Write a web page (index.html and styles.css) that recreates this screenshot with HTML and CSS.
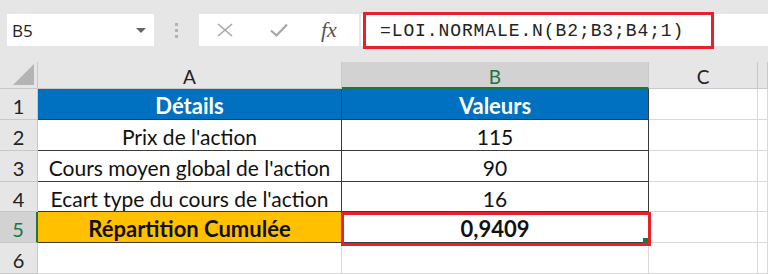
FILE: index.html
```html
<!DOCTYPE html>
<html lang="fr">

<head>
    <meta charset="UTF-8">
    <meta name="viewport" content="width=device-width, initial-scale=1.0">
    <title>LOI.NORMALE.N</title>
    <link rel="stylesheet" href="styles.css">
</head>

<body>
    <div class="toolbar">
        <div class="name-box">
            <span>B5</span>
            <span class="arrow"></span>
        </div>
        <div class="dots">
            <span></span>
            <span></span>
            <span></span>
        </div>
        <div class="func-box">
            <svg class="ico-x" width="16" height="14" viewBox="0 0 16 14">
                <path d="M1 1 L15 13 M15 1 L1 13" stroke="#a6a6a6" stroke-width="1.6" fill="none" />
            </svg>
            <svg class="ico-ok" width="18" height="14" viewBox="0 0 18 14">
                <path d="M1 7.5 L6.5 12.5 L17 1.5" stroke="#a6a6a6" stroke-width="2.2" fill="none" />
            </svg>
            <span class="fx">fx</span>
        </div>
        <div class="formula">
            <div class="formula-hl">=LOI.NORMALE.N(B2;B3;B4;1)</div>
        </div>
    </div>

    <div class="sheet">
        <!-- en-tetes de colonnes -->
        <div class="hd corner"><span class="tri"></span></div>
        <div class="hd">A</div>
        <div class="hd sel-col">B</div>
        <div class="hd">C</div>
        <div class="hd"></div>

        <!-- ligne 1 -->
        <div class="hd row-no">1</div>
        <div class="c t blue">Détails</div>
        <div class="c t blue">Valeurs</div>
        <div class="c"></div>
        <div class="c"></div>

        <!-- ligne 2 -->
        <div class="hd row-no">2</div>
        <div class="c t">Prix de l'action</div>
        <div class="c t">115</div>
        <div class="c"></div>
        <div class="c"></div>

        <!-- ligne 3 -->
        <div class="hd row-no">3</div>
        <div class="c t">Cours moyen global de l'action</div>
        <div class="c t">90</div>
        <div class="c"></div>
        <div class="c"></div>

        <!-- ligne 4 -->
        <div class="hd row-no">4</div>
        <div class="c t">Ecart type du cours de l'action</div>
        <div class="c t">16</div>
        <div class="c"></div>
        <div class="c"></div>

        <!-- ligne 5 -->
        <div class="hd row-no sel-row">5</div>
        <div class="c t orange">Répartition Cumulée</div>
        <div class="c t bold active">0,9409<span class="handle"></span></div>
        <div class="c"></div>
        <div class="c"></div>

        <!-- ligne 6 -->
        <div class="hd row-no">6</div>
        <div class="c"></div>
        <div class="c"></div>
        <div class="c"></div>
        <div class="c"></div>
    </div>
</body>

</html>
```

FILE: styles.css
```css
* {
    margin: 0;
    padding: 0;
    box-sizing: border-box;
}

body {
    width: 768px;
    height: 274px;
    overflow: hidden;
    background-color: #e6e6e6;
    font-family: Lato, "Liberation Sans", sans-serif;
}

/* barre de formule */
.toolbar {
    display: flex;
    align-items: flex-start;
    height: 62px;
    padding-top: 14px;
    padding-left: 7px;
}

.name-box {
    display: flex;
    align-items: center;
    justify-content: space-between;
    width: 147px;
    height: 32px;
    padding: 0 8px 0 5px;
    background-color: white;
    font-family: "Open Sans", sans-serif;
    font-size: 17px;
    color: #222;
}

.arrow {
    width: 0;
    height: 0;
    border-left: 5px solid transparent;
    border-right: 5px solid transparent;
    border-top: 5px solid #666;
}

.dots {
    display: flex;
    flex-direction: column;
    align-items: center;
    gap: 3px;
    width: 45px;
    padding-top: 9px;
}

.dots span {
    width: 3px;
    height: 3px;
    background-color: #b3b3b3;
}

.func-box {
    display: flex;
    align-items: center;
    width: 160px;
    height: 32px;
    background-color: white;
}

.ico-x {
    margin-left: 18px;
}

.ico-ok {
    margin-left: 37px;
}

.fx {
    margin-left: 33px;
    font-family: "Liberation Serif", serif;
    font-style: italic;
    font-size: 22px;
    color: #555;
    line-height: 1;
}

.formula {
    flex: 1;
    height: 32px;
    margin-left: 2px;
    background-color: white;
}

.formula-hl {
    display: flex;
    align-items: center;
    width: 351px;
    height: 37px;
    margin-top: -2px;
    margin-left: 2px;
    padding-left: 14px;
    border: 3px solid #e8202a;
    font-family: "Liberation Mono", monospace;
    font-size: 18px;
    letter-spacing: 0.9px;
    color: #222;
}

/* feuille */
.sheet {
    display: grid;
    grid-template-columns: 38px 304px 307px 109px 10px;
    grid-template-rows: 27px 31px 31px 31px 30px 31px 31px;
    background-color: white;
}

.hd {
    display: flex;
    align-items: center;
    justify-content: center;
    padding-top: 3px;
    background-color: #e6e6e6;
    border-right: 1px solid #c8c8c8;
    border-bottom: 1px solid #c8c8c8;
    font-size: 19px;
    color: #222;
}

.corner {
    position: relative;
}

.tri {
    position: absolute;
    right: 3px;
    bottom: 3px;
    width: 0;
    height: 0;
    border-left: 21px solid transparent;
    border-bottom: 21px solid #b4b4b4;
}

.row-no {
    font-size: 20px;
    padding-top: 4px;
}

.sel-col {
    background-color: #d2d2d2;
    border-bottom: 2px solid #217346;
    color: #217346;
}

.sel-row {
    background-color: #d2d2d2;
    border-right: 2px solid #217346;
    color: #217346;
}

.c {
    display: flex;
    align-items: center;
    justify-content: center;
    padding-top: 3px;
    border-right: 1px solid #d9d9d9;
    border-bottom: 1px solid #d9d9d9;
    font-size: 21px;
    color: #111;
    white-space: nowrap;
}

.c.t {
    border-right-color: #3a3a3a;
    border-bottom-color: #3a3a3a;
}

.blue {
    background-color: #0070c0;
    color: white;
    font-weight: bold;
    font-size: 22px;
}

.orange {
    background-color: #ffc000;
    font-weight: bold;
    font-size: 22px;
}

.bold {
    font-weight: bold;
    font-size: 22px;
}

.active {
    position: relative;
}

.active::after {
    content: "";
    position: absolute;
    top: 0;
    left: -1px;
    right: -3px;
    bottom: -4px;
    border: 3px solid #e8202a;
}

.handle {
    position: absolute;
    right: 0;
    bottom: -1px;
    width: 5px;
    height: 5px;
    background-color: #217346;
}
```
